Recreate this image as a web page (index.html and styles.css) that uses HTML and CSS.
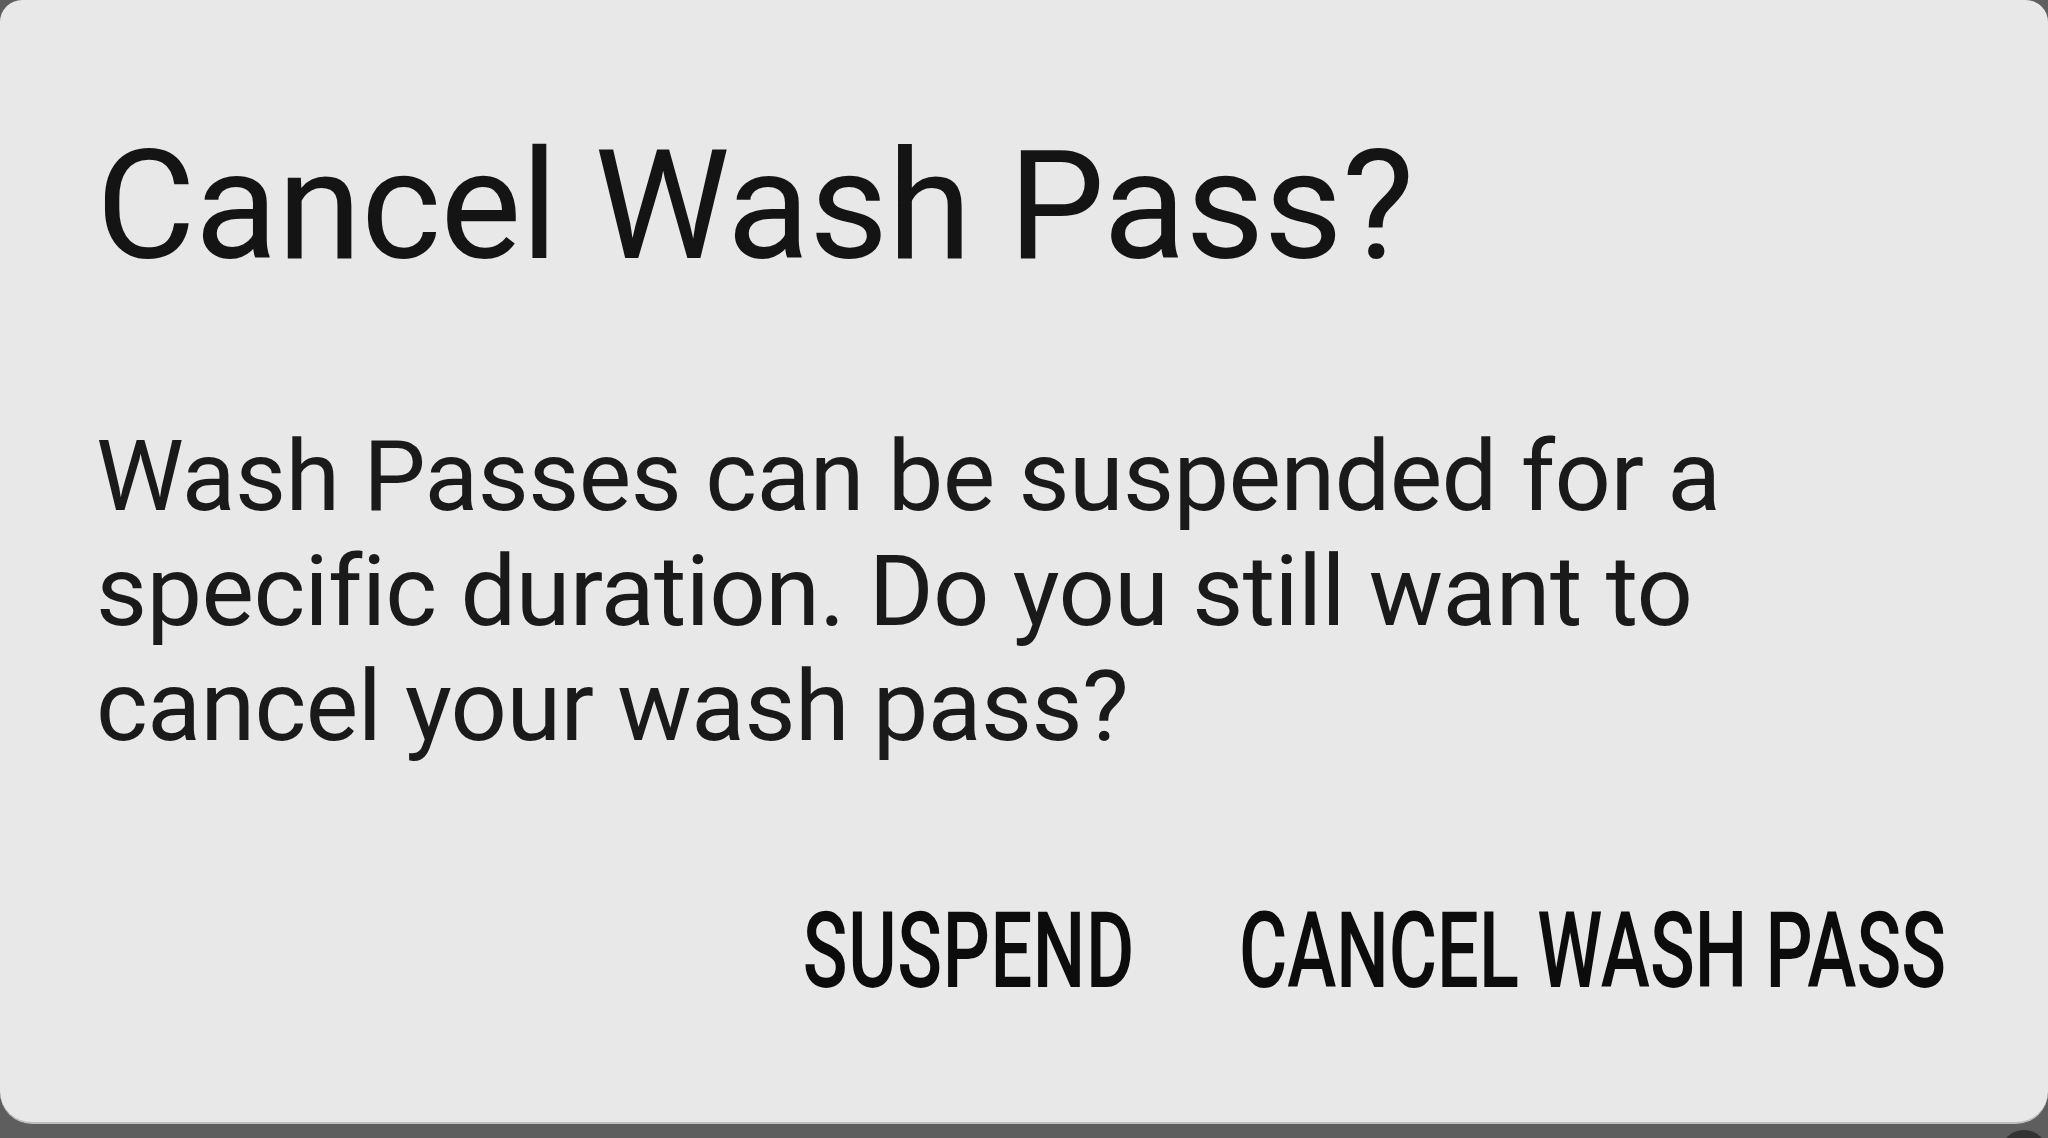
FILE: index.html
```html
<!DOCTYPE html>
<html lang="en">
<head>
  <meta charset="UTF-8" />
  <meta name="viewport" content="width=device-width, initial-scale=1.0" />
  <title>Cancel Wash Pass?</title>
  <link rel="stylesheet" href="styles.css">
</head>
<body>

  <div class="dialog">
    <h1 class="dialog-title">Cancel Wash Pass?</h1>
    <p class="dialog-text">Wash Passes can be suspended for a specific duration. Do you still want to cancel your wash pass?</p>
    <div class="dialog-actions">
      <button class="btn-action"><span class="btn-label">Suspend</span></button>
      <button class="btn-action"><span class="btn-label">Cancel Wash Pass</span></button>
    </div>
  </div>

  <div class="fab-peek"></div>

</body>
</html>
```

FILE: styles.css
```css
*, *::before, *::after { box-sizing: border-box; margin: 0; padding: 0; }

html, body {
  width: 100%;
  height: 100%;
  overflow: hidden;
}

body {
  background: #5e5e5e;
  font-family: Roboto, 'Liberation Sans', sans-serif;
  color: #141414;
  position: relative;
}

/* Dialog card */
.dialog {
  background: #e8e8e8;
  height: 1124px;
  border-radius: 22px 22px 32px 32px;
  border-bottom: 2px solid #bdbdbd;
  padding: 113px 102px 0 96px;
}

.dialog-title {
  font-size: 153px;
  font-weight: 400;
  line-height: 186px;
  letter-spacing: -0.005em;
  margin-bottom: 120px;
}

.dialog-text {
  font-size: 99px;
  line-height: 115px;
  letter-spacing: -0.6px;
  max-width: 1700px;
  color: #1a1a1a;
}

/* Buttons: tall condensed caps */
.dialog-actions {
  display: flex;
  justify-content: flex-end;
  gap: 104px;
  margin-top: 148px;
}

.btn-action {
  background: none;
  border: none;
  font-family: Roboto, 'Liberation Sans', sans-serif;
  font-size: 74px;
  font-weight: 500;
  line-height: 100px;
  color: #0c0c0c;
  text-transform: uppercase;
  cursor: pointer;
}

.btn-action:first-child .btn-label { letter-spacing: 0.6px; }

.btn-label {
  display: inline-block;
  transform: scaleY(1.42);
  transform-origin: 50% 75px;
}

/* Edge of a round button peeking out below the card */
.fab-peek {
  position: absolute;
  right: 0;
  bottom: -40px;
  width: 48px;
  height: 48px;
  border-radius: 50%;
  background: #333;
}
```
